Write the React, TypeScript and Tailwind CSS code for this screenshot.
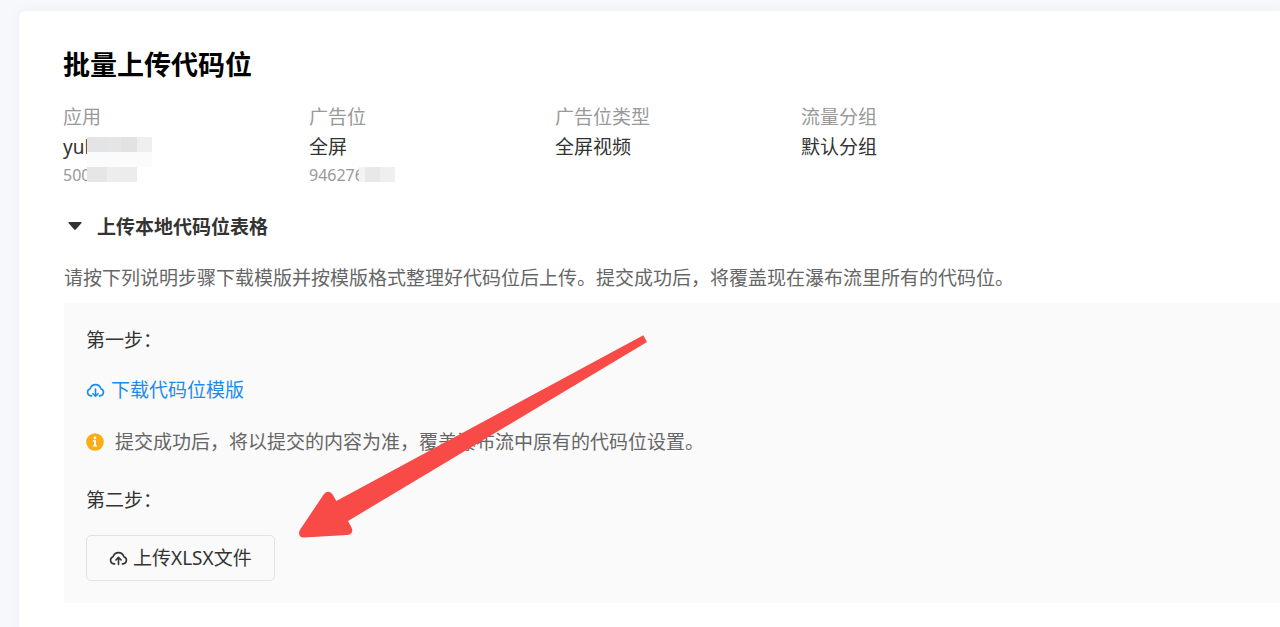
import React from 'react'

function CloudIcon({ up = false }: { up?: boolean }) {
    return (
        <svg width="19" height="19" viewBox="0 0 19 19" fill="none" stroke="currentColor" strokeWidth="1.6" strokeLinecap="round" strokeLinejoin="round" aria-hidden="true">
            <path d="M5.6 14.9 H4.9 A3.7 3.7 0 0 1 4.1 7.7 A5.6 5.6 0 0 1 14.9 7.7 A3.7 3.7 0 0 1 14.1 14.9 H13.4" />
            {up ? <path d="M9.5 15.4 V8.6 M6.9 11 L9.5 8.4 L12.1 11" /> : <path d="M9.5 8 V15 M6.9 12.7 L9.5 15.3 L12.1 12.7" />}
        </svg>
    )
}

function InfoIcon() {
    return (
        <svg width="18" height="18" viewBox="0 0 18 18" aria-hidden="true">
            <circle cx="9" cy="9" r="8.8" fill="#faad14" />
            <circle cx="9" cy="4.9" r="1.3" fill="#fff" />
            <path d="M6.9 7.2 H10 V12.2 H11.2 V13.6 H6.8 V12.2 H8 V8.6 H6.9 Z" fill="#fff" />
        </svg>
    )
}

function NameMask() {
    return (
        <span className="absolute left-6 top-0 pt-[5px]" aria-hidden="true">
            <span className="flex">
                <span className="w-5 h-[15px] bg-[#e3e4e6]" />
                <span className="w-[14px] h-[15px] bg-[#e5e5e6]" />
                <span className="w-4 h-[15px] bg-[#e3e2e2]" />
                <span className="w-[15px] h-[15px] bg-[#eeefef]" />
            </span>
            <span className="block w-[65px] h-[15px] bg-[#fbfbfb]" />
        </span>
    )
}

function AppIdMask() {
    return (
        <span className="absolute left-6 top-[5px] flex" aria-hidden="true">
            <span className="w-5 h-[15px] bg-[#e6e6e6]" />
            <span className="w-[14px] h-[15px] bg-[#ededec]" />
            <span className="w-4 h-[15px] bg-[#ececec]" />
        </span>
    )
}

function SlotIdMask() {
    return (
        <span className="absolute left-[50px] top-[5px] flex" aria-hidden="true">
            <span className="w-[6px] h-[15px] bg-[#f3f3f3]" />
            <span className="w-[15px] h-[15px] bg-[#e8e8e8]" />
            <span className="w-[15px] h-[15px] bg-[#efefef]" />
        </span>
    )
}

const fields = [
    { label: '应用', value: 'yuh', valueMask: <NameMask />, id: '500', idMask: <AppIdMask /> },
    { label: '广告位', value: '全屏', id: '946276', idMask: <SlotIdMask /> },
    { label: '广告位类型', value: '全屏视频' },
    { label: '流量分组', value: '默认分组' },
]

export default function App() {
    return (
        <div className="min-h-screen flex overflow-hidden bg-[#f7f8fc] pl-[19px] pt-[11px] font-['Noto_Sans','Noto_Sans_CJK_SC',sans-serif] text-[19px] leading-[30px] text-[#333]">
            <main className="flex-1 min-w-0 bg-white rounded-tl-md pl-11 pt-9 shadow-[0_0_12px_rgba(30,50,110,0.05)]">
                <h1 className="text-[27px] leading-9 font-bold text-black">批量上传代码位</h1>

                <dl className="mt-[19px] grid grid-cols-[repeat(4,246px)]">
                    {fields.map((f) => (
                        <div key={f.label}>
                            <dt className="text-[#999]">{f.label}</dt>
                            <dd className="relative">
                                {f.value}
                                {f.valueMask}
                            </dd>
                            {f.id && (
                                <dd className="relative text-base leading-[26px] text-[#999]">
                                    {f.id}
                                    {f.idMask}
                                </dd>
                            )}
                        </div>
                    ))}
                </dl>

                <div className="pl-px">
                    <h2 className="mt-6 font-bold">
                        <button type="button" aria-expanded="true" className="flex items-center gap-[15px] pl-1">
                            <svg width="14" height="12" viewBox="0 0 14 12" fill="currentColor" aria-hidden="true">
                                <path d="M0.8 1 H13.2 Q14 1.3 13.5 2.1 L7.8 8.6 Q7 9.3 6.2 8.6 L0.5 2.1 Q0 1.3 0.8 1 Z" />
                            </svg>
                            上传本地代码位表格
                        </button>
                    </h2>

                    <p className="mt-[21px] text-[#666]">
                        请按下列说明步骤下载模版并按模版格式整理好代码位后上传。提交成功后，将覆盖现在瀑布流里所有的代码位。
                    </p>

                    <section className="relative mt-[10px] bg-[#fafafa] px-[22px] py-[22px]">
                        <h3>第一步：</h3>
                        <a href="#" className="mt-5 flex w-fit items-center gap-[6px] text-[#1a8cee]">
                            <CloudIcon />
                            下载代码位模版
                        </a>
                        <p className="mt-[22px] flex items-center gap-[11px] text-[#666]">
                            <InfoIcon />
                            提交成功后，将以提交的内容为准，覆盖瀑布流中原有的代码位设置。
                        </p>
                        <h3 className="mt-7">第二步：</h3>
                        <button
                            type="button"
                            className="mt-5 flex h-[46px] items-center gap-[5px] rounded-[5px] border border-[#e2e2e2] px-[22px]"
                        >
                            <CloudIcon up />
                            上传XLSX文件
                        </button>

                        <svg
                            className="absolute left-[235px] top-8 pointer-events-none"
                            width="348"
                            height="204"
                            viewBox="299 335 348 204"
                            fill="#f84b47"
                            aria-hidden="true"
                        >
                            <path d="M643.3 335.2 L647 342 L348 521 L351.5 527.5 Q353.5 532 350.5 534 Q349 535 347 535 L304 537.6 Q299 537.5 299 533 Q299 531 300.5 529 L324 494 Q326 491.5 328.5 491.7 Q331 492 332.3 494 L336.3 501 Z" />
                        </svg>
                    </section>
                </div>
            </main>
        </div>
    )
}
